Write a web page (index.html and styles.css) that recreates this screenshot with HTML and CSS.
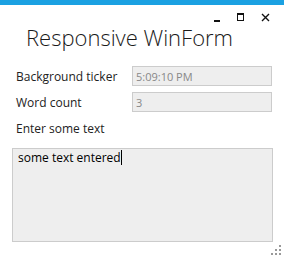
FILE: index.html
```html
<!DOCTYPE html>
<html lang="en">
<head>
    <meta charset="UTF-8" />
    <title>Responsive WinForm</title>
    <link rel="stylesheet" href="styles.css">
</head>
<body>
<div class="accent"></div>

<div class="titlebar">
    <span class="ctl ctl-min"></span>
    <span class="ctl ctl-max"></span>
    <svg class="ctl-close" width="9" height="9" viewBox="0 0 9 9">
        <path d="M1 1 L8 8 M8 1 L1 8" stroke="#111" stroke-width="1.4" />
    </svg>
</div>

<h1 class="title">Responsive WinForm</h1>

<div class="fields">
    <label for="ticker">Background ticker</label>
    <input type="text" id="ticker" value="5:09:10 PM" readonly>
    <label for="count">Word count</label>
    <input type="text" id="count" value="3" readonly>
</div>

<div class="prompt">Enter some text</div>

<div class="editor">
    <span class="entered">some text entered</span><span class="caret"></span>
</div>

<svg class="grip" width="10" height="10" viewBox="0 0 10 10">
    <rect x="8" y="0" width="2" height="2" fill="#999" />
    <rect x="4" y="4" width="2" height="2" fill="#999" />
    <rect x="8" y="4" width="2" height="2" fill="#999" />
    <rect x="0" y="8" width="2" height="2" fill="#999" />
    <rect x="4" y="8" width="2" height="2" fill="#999" />
    <rect x="8" y="8" width="2" height="2" fill="#999" />
</svg>
</body>
</html>
```

FILE: styles.css
```css
body {
    margin: 0;
    width: 284px;
    height: 262px;
    background-color: #fff;
    font-family: "Open Sans", "Noto Sans", sans-serif;
    color: #222;
    position: relative;
    overflow: hidden;
}
.accent {
    height: 5px;
    background-color: #1ba1e2;
}
.titlebar {
    display: flex;
    justify-content: flex-end;
    align-items: center;
    gap: 17px;
    height: 12px;
    padding: 6px 14px 0 0;
}
.ctl-min {
    width: 6px;
    height: 2px;
    background-color: #111;
    margin-top: 8px;
}
.ctl-max {
    width: 5px;
    height: 5px;
    border: 1px solid #111;
    border-top-width: 2px;
}
.title {
    margin: 0 0 0 26px;
    font-size: 22px;
    font-weight: 300;
    line-height: 28px;
    color: #1a1a1a;
}
.fields {
    display: grid;
    grid-template-columns: 116px 140px;
    row-gap: 6px;
    align-items: center;
    margin: 15px 0 0 16px;
}
.fields label {
    font-size: 12px;
    color: #222;
}
.fields input {
    box-sizing: border-box;
    height: 20px;
    margin: 0;
    padding: 0 3px;
    font-family: inherit;
    font-size: 11px;
    color: #888;
    background-color: #eee;
    border: 1px solid #ccc;
    outline: none;
}
.prompt {
    margin: 8px 0 0 16px;
    font-size: 12px;
    line-height: 18px;
}
.editor {
    box-sizing: border-box;
    width: 261px;
    height: 94px;
    margin: 10px 0 0 12px;
    padding: 0 5px;
    background-color: #eee;
    border: 1px solid #ccc;
    font-size: 12px;
    line-height: 18px;
    color: #000;
}
.caret {
    display: inline-block;
    width: 1px;
    height: 15px;
    background-color: #000;
    vertical-align: -3px;
}
.grip {
    position: absolute;
    right: 3px;
    bottom: 7px;
}
```
